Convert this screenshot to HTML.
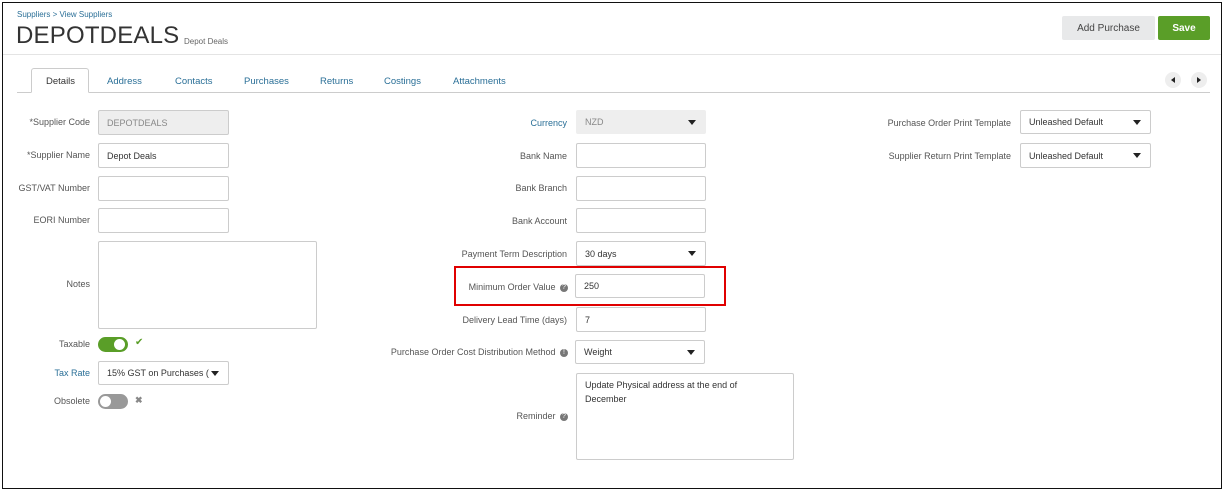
<!DOCTYPE html><html><head><style>
body{margin:0;width:1225px;height:490px;background:#fff;font-family:"Liberation Sans",sans-serif;position:relative;overflow:hidden;color:#444}
.a{position:absolute}
.lb{position:absolute;font-size:9px;color:#555;text-align:right;white-space:nowrap}
.in{position:absolute;box-sizing:border-box;border:1px solid #ccc;border-radius:2px;background:#fff;font-size:9px;color:#333;padding-left:8px;line-height:22px}
.g{background:#eee;color:#888}
.sel:after{content:"";position:absolute;right:9px;top:9px;border-left:4px solid transparent;border-right:4px solid transparent;border-top:5px solid #222}
.tab{position:absolute;top:76px;font-size:9.5px;color:#2a6f97}
.q{display:inline-block;width:8px;height:8px;border-radius:50%;background:#777;color:#fff;font-size:7px;line-height:8px;text-align:center;vertical-align:middle;margin-left:2px}
</style></head><body>
<div class="a" style="left:2px;top:2px;width:1218px;height:485px;border:1px solid #111"></div>
<div class="a" style="left:17px;top:10px;font-size:8px;color:#2a6f97">Suppliers &gt; View Suppliers</div>
<div class="a" style="left:16px;top:22px;font-size:24px;color:#333;letter-spacing:0.2px">DEPOTDEALS</div>
<div class="a" style="left:184px;top:37px;font-size:8px;color:#666">Depot Deals</div>
<div class="a" style="left:3px;top:54px;width:1218px;height:1px;background:#e4e4e4"></div>
<div class="a" style="left:1062px;top:16px;width:93px;height:24px;background:#e8e9ea;border-radius:2px;font-size:10px;color:#444;text-align:center;line-height:26px">Add Purchase</div>
<div class="a" style="left:1158px;top:16px;width:52px;height:24px;background:#5a9e28;border-radius:2px;font-size:10px;color:#fff;font-weight:bold;text-align:center;line-height:26px">Save</div>
<div class="a" style="left:17px;top:92px;width:1193px;height:1px;background:#ccc"></div>
<div class="a" style="left:31px;top:68px;width:58px;height:25px;border:1px solid #ccc;border-bottom:1px solid #fff;border-radius:3px 3px 0 0;background:#fff;box-sizing:border-box"></div>
<div class="tab" style="left:46px;color:#333">Details</div>
<div class="tab" style="left:107px">Address</div>
<div class="tab" style="left:175px">Contacts</div>
<div class="tab" style="left:244px">Purchases</div>
<div class="tab" style="left:320px">Returns</div>
<div class="tab" style="left:384px">Costings</div>
<div class="tab" style="left:453px">Attachments</div>
<div class="a" style="left:1165px;top:72px;width:16px;height:16px;border-radius:50%;background:#eee"></div>
<div class="a" style="left:1171px;top:77px;border-top:3px solid transparent;border-bottom:3px solid transparent;border-right:4px solid #222"></div>
<div class="a" style="left:1191px;top:72px;width:16px;height:16px;border-radius:50%;background:#eee"></div>
<div class="a" style="left:1197px;top:77px;border-top:3px solid transparent;border-bottom:3px solid transparent;border-left:4px solid #222"></div>

<div class="lb" style="right:1135px;top:117px">*Supplier Code</div>
<div class="in g" style="left:98px;top:110px;width:131px;height:25px;line-height:24px">DEPOTDEALS</div>
<div class="lb" style="right:1135px;top:150px">*Supplier Name</div>
<div class="in" style="left:98px;top:143px;width:131px;height:25px;line-height:24px">Depot Deals</div>
<div class="lb" style="right:1135px;top:183px">GST/VAT Number</div>
<div class="in" style="left:98px;top:176px;width:131px;height:25px"></div>
<div class="lb" style="right:1135px;top:215px">EORI Number</div>
<div class="in" style="left:98px;top:208px;width:131px;height:25px"></div>
<div class="lb" style="right:1135px;top:279px">Notes</div>
<div class="in" style="left:98px;top:241px;width:219px;height:88px"></div>
<div class="lb" style="right:1135px;top:339px">Taxable</div>
<div class="a" style="left:98px;top:337px;width:30px;height:15px;border-radius:8px;background:#5a9e28"></div>
<div class="a" style="left:114px;top:339px;width:11px;height:11px;border-radius:50%;background:#fff"></div>
<div class="a" style="left:135px;top:337px;font-size:10px;color:#5a9e28">✔</div>
<div class="lb" style="right:1135px;top:368px;color:#2a6f97">Tax Rate</div>
<div class="in sel" style="left:98px;top:361px;width:131px;height:24px">15% GST on Purchases (</div>
<div class="lb" style="right:1135px;top:396px">Obsolete</div>
<div class="a" style="left:98px;top:394px;width:30px;height:15px;border-radius:8px;background:#999"></div>
<div class="a" style="left:100px;top:396px;width:11px;height:11px;border-radius:50%;background:#fff"></div>
<div class="a" style="left:135px;top:395px;font-size:9px;color:#888;font-weight:bold">✖</div>

<div class="lb" style="right:658px;top:118px;color:#2a6f97">Currency</div>
<div class="in g sel" style="left:576px;top:110px;width:130px;height:24px;border-color:#eee">NZD</div>
<div class="lb" style="right:658px;top:151px">Bank Name</div>
<div class="in" style="left:576px;top:143px;width:130px;height:25px"></div>
<div class="lb" style="right:658px;top:183px">Bank Branch</div>
<div class="in" style="left:576px;top:176px;width:130px;height:25px"></div>
<div class="lb" style="right:658px;top:216px">Bank Account</div>
<div class="in" style="left:576px;top:208px;width:130px;height:25px"></div>
<div class="lb" style="right:658px;top:249px">Payment Term Description</div>
<div class="in sel" style="left:576px;top:241px;width:130px;height:25px;line-height:24px">30 days</div>
<div class="a" style="left:454px;top:266px;width:268px;height:36px;border:2px solid #e00000"></div>
<div class="lb" style="right:657px;top:282px">Minimum Order Value <span class="q">?</span></div>
<div class="in" style="left:575px;top:274px;width:130px;height:24px">250</div>
<div class="lb" style="right:658px;top:315px">Delivery Lead Time (days)</div>
<div class="in" style="left:576px;top:307px;width:130px;height:25px;line-height:24px">7</div>
<div class="lb" style="right:657px;top:347px">Purchase Order Cost Distribution Method <span class="q">!</span></div>
<div class="in sel" style="left:575px;top:340px;width:130px;height:24px">Weight</div>
<div class="lb" style="right:657px;top:411px">Reminder <span class="q">?</span></div>
<div class="in" style="left:576px;top:373px;width:218px;height:87px;line-height:14px;padding-top:4px;padding-right:35px">Update Physical address at the end of December</div>

<div class="lb" style="right:214px;top:118px">Purchase Order Print Template</div>
<div class="in sel" style="left:1020px;top:110px;width:131px;height:24px">Unleashed Default</div>
<div class="lb" style="right:214px;top:151px">Supplier Return Print Template</div>
<div class="in sel" style="left:1020px;top:143px;width:131px;height:25px;line-height:24px">Unleashed Default</div>
</body></html>
